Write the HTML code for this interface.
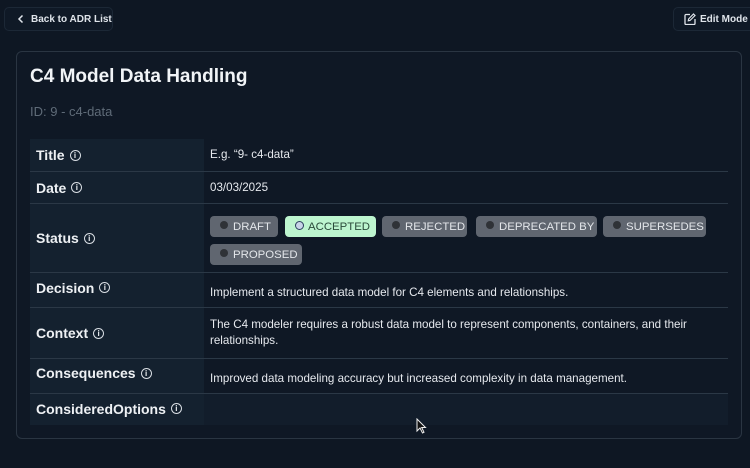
<!DOCTYPE html>
<html><head><meta charset="utf-8"><style>
*{box-sizing:border-box;margin:0;padding:0}
body{width:750px;height:468px;background:#0e1723;font-family:"Liberation Sans",sans-serif;position:relative;overflow:hidden;color:#e6e9ee}
.btn{position:absolute;border:1px solid #1c2836;border-radius:5px;background:#0f1926;font-size:10px;font-weight:bold;color:#dfe4ea;display:flex;align-items:center;white-space:nowrap}
.card{position:absolute;left:16px;top:51px;width:726px;height:388px;border:1px solid #2a3542;border-radius:6px;background:#0f1825}
h1{position:absolute;left:30px;top:66px;font-size:19px;font-weight:bold;color:#f1f4f7}
.id{position:absolute;left:30px;top:104px;font-size:13px;color:#5f6b78}
.row{position:absolute;left:30px;width:698px;border-top:1px solid #2b3846}
.lab{position:absolute;left:0;top:0;bottom:0;width:174px;background:#14212f;font-weight:bold;font-size:14px;color:#eef1f4;padding-left:6px;display:flex;align-items:center}
.lab span{display:inline-block;width:11px;height:11px;border:1.3px solid #d8dde3;border-radius:50%;margin-left:5px;font-size:8px;line-height:9px;text-align:center;font-weight:bold}
.val{position:absolute;left:180px;top:0;bottom:0;right:0;font-size:11.6px;color:#e6e9ee;display:flex;align-items:center;line-height:16px}
.chip{position:absolute;height:21px;border-radius:4px;background:#606670;color:#e3e6ea;font-size:11.4px;display:flex;align-items:center;padding-left:23px;white-space:nowrap}
.chip:before{content:"";position:absolute;left:10px;top:5px;width:8px;height:8px;border-radius:50%;background:#2f3237}
.chip.acc{background:#bdf5cf;color:#2a4a3a}
.chip.acc:before{background:#c8d4e8;border:1.5px solid #2b3e5e;width:9px;height:9px;box-sizing:border-box}
</style></head><body>
<div class="btn" style="left:4px;top:7px;width:109px;height:24px;padding-left:12px"><svg width="8" height="10" viewBox="0 0 8 10"><path d="M5.5 1.5 L2 5 L5.5 8.5" stroke="#dfe4ea" stroke-width="1.5" fill="none"/></svg><span style="margin-left:6px">Back to ADR List</span></div>
<div class="btn" style="left:673px;top:7px;width:82px;height:24px;padding-left:10px"><svg width="12" height="12" viewBox="0 0 12 12"><path d="M6 1.5H2a1 1 0 0 0-1 1v8a1 1 0 0 0 1 1h8a1 1 0 0 0 1-1V6" stroke="#dfe4ea" stroke-width="1.3" fill="none"/><path d="M9.5 1 L11 2.5 L6 7.5 L4.3 7.8 L4.6 6 Z" stroke="#dfe4ea" stroke-width="1.2" fill="none"/></svg><span style="margin-left:4px">Edit Mode</span></div>
<div class="card"></div>
<h1>C4 Model Data Handling</h1>
<div class="id">ID: 9 - c4-data</div>

<div class="row" style="top:139px;height:32px;border-top:none"><div class="lab">Title<span>i</span></div><div class="val">E.g. “9- c4-data”</div></div>
<div class="row" style="top:171px;height:32px"><div class="lab">Date<span>i</span></div><div class="val">03/03/2025</div></div>
<div class="row" style="top:203px;height:69px"><div class="lab">Status<span>i</span></div></div>
<div class="chip" style="left:210px;top:216px;width:68px">DRAFT</div>
<div class="chip acc" style="left:285px;top:216px;width:91px">ACCEPTED</div>
<div class="chip" style="left:382px;top:216px;width:85px">REJECTED</div>
<div class="chip" style="left:476px;top:216px;width:121px">DEPRECATED BY</div>
<div class="chip" style="left:603px;top:216px;width:103px">SUPERSEDES</div>
<div class="chip" style="left:210px;top:244px;width:92px">PROPOSED</div>
<div class="row" style="top:272px;height:35px"><div class="lab" style="padding-bottom:5px">Decision<span>i</span></div><div class="val" style="padding-top:5px">Implement a structured data model for C4 elements and relationships.</div></div>
<div class="row" style="top:307px;height:51px"><div class="lab">Context<span>i</span></div><div class="val">The C4 modeler requires a robust data model to represent components, containers, and their<br>relationships.</div></div>
<div class="row" style="top:358px;height:35px"><div class="lab" style="padding-bottom:6px">Consequences<span>i</span></div><div class="val" style="padding-top:5px">Improved data modeling accuracy but increased complexity in data management.</div></div>
<div class="row" style="top:393px;height:32px;background:#121d2b"><div class="lab" style="padding-bottom:2px">ConsideredOptions<span>i</span></div></div>
<svg style="position:absolute;left:416px;top:418px" width="12" height="17" viewBox="0 0 12 17"><path d="M1 1 L1 13 L4 10 L6.5 15 L8 14.3 L5.7 9.5 L9.5 9.5 Z" fill="#111" stroke="#eee" stroke-width="1"/></svg>
</body></html>
